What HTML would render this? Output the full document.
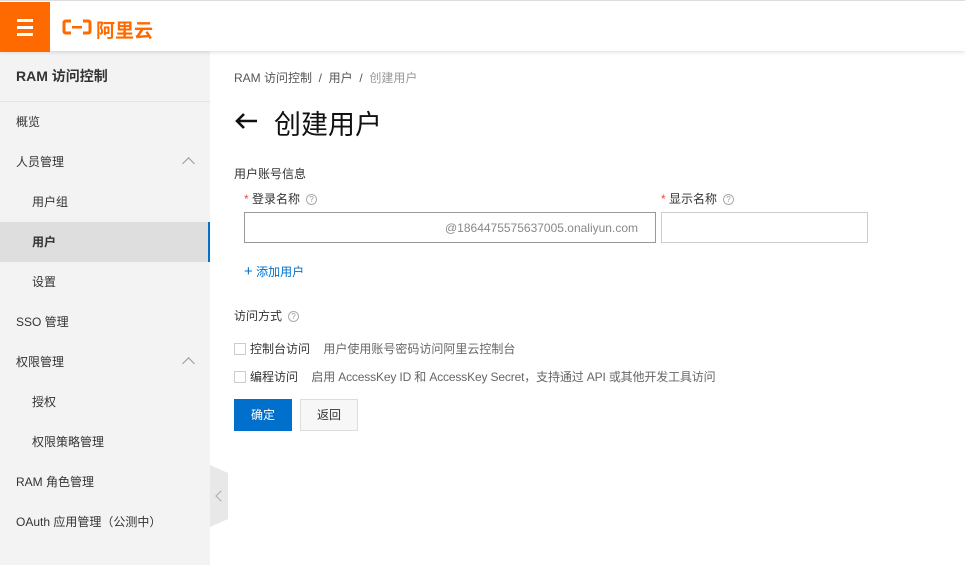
<!DOCTYPE html>
<html><head><meta charset="utf-8"><style>
*{margin:0;padding:0;box-sizing:border-box}
body{width:965px;height:565px;overflow:hidden;background:#fff;font-family:"Liberation Sans","Noto Sans CJK SC",sans-serif;color:#333;position:relative;font-size:12px}
.top{position:absolute;left:0;top:0;width:965px;height:51px;background:#fff;border-top:1px solid #ddd;box-shadow:0 1px 4px rgba(0,0,0,.15);z-index:3}
.burger{position:absolute;left:0;top:1px;width:50px;height:50px;background:#ff6a00}
.burger i{position:absolute;left:17px;width:16px;height:2.5px;background:#fff}
.logo{position:absolute;left:96px;top:15px;color:#ff6a00;font-size:19px;font-weight:bold;letter-spacing:0px}
.side{position:absolute;left:0;top:51px;width:210px;height:514px;background:#f3f3f3}
.side .h{height:51px;line-height:50px;padding-left:16px;font-size:14px;font-weight:bold;color:#333;border-bottom:1px solid #e4e4e4}
.it{height:40px;line-height:40px;padding-left:16px;font-size:12px;color:#333;position:relative}
.sub{padding-left:32px}
.act{background:#dedede;border-right:2px solid #0070cc;font-weight:bold}
.car{position:absolute;right:17px;top:17px;width:9px;height:9px;border-left:1.5px solid #999;border-top:1.5px solid #999;transform:rotate(45deg)}
.tab{position:absolute;left:210px;top:465px;width:18px;height:62px;background:#e8e8e8;clip-path:polygon(0 0,100% 8px,100% 54px,0 100%)}
.tab:after{content:"";position:absolute;left:7px;top:27px;width:7px;height:7px;border-left:1.5px solid #aaa;border-bottom:1.5px solid #aaa;transform:rotate(45deg)}
.a{position:absolute;white-space:nowrap}
.q{display:inline-block;width:11px;height:11px;border:1px solid #aaa;border-radius:50%;font-size:8px;line-height:9px;text-align:center;color:#999;vertical-align:1px;margin-left:6px}
.red{color:#e84d3d}
.cb{display:inline-block;width:12px;height:12px;border:1px solid #ccc;vertical-align:-2px;margin-right:4px;background:#fff}
</style></head><body>
<div class="top"><div class="burger"><i style="top:17px"></i><i style="top:24px"></i><i style="top:31px"></i></div>
<svg style="position:absolute;left:62px;top:18px" width="30" height="16" viewBox="0 0 30 16"><path d="M9 2H4Q2 2 2 4V12Q2 14 4 14H9M21 2H26Q28 2 28 4V12Q28 14 26 14H21" fill="none" stroke="#ff6a00" stroke-width="3"/><rect x="10" y="7" width="10" height="2.5" fill="#ff6a00"/></svg>
<div class="logo">阿里云</div></div>
<div class="side">
<div class="h">RAM 访问控制</div>
<div class="it">概览</div>
<div class="it">人员管理<span class="car"></span></div>
<div class="it sub">用户组</div>
<div class="it sub act">用户</div>
<div class="it sub">设置</div>
<div class="it">SSO 管理</div>
<div class="it">权限管理<span class="car"></span></div>
<div class="it sub">授权</div>
<div class="it sub">权限策略管理</div>
<div class="it">RAM 角色管理</div>
<div class="it">OAuth 应用管理（公测中）</div>
</div>
<div class="tab"></div>
<div class="a" style="left:234px;top:69px;color:#555">RAM 访问控制 &nbsp;/&nbsp; 用户 &nbsp;/&nbsp; <span style="color:#999">创建用户</span></div>
<svg style="position:absolute;left:234px;top:112px" width="24" height="18" viewBox="0 0 24 18"><path d="M23 9H3M10 2L3 9L10 16" fill="none" stroke="#111" stroke-width="2.6"/></svg>
<div class="a" style="left:274px;top:103px;font-size:27px;color:#111">创建用户</div>
<div class="a" style="left:234px;top:165px;color:#333">用户账号信息</div>
<div class="a" style="left:244px;top:190px;color:#333"><span class="red">*</span> 登录名称<span class="q">?</span></div>
<div class="a" style="left:661px;top:190px;color:#333"><span class="red">*</span> 显示名称<span class="q">?</span></div>
<div class="a" style="left:244px;top:212px;width:412px;height:31px;border:1px solid #999;text-align:right;padding-right:17px;line-height:30px;color:#888">@1864475575637005.onaliyun.com</div>
<div class="a" style="left:661px;top:212px;width:207px;height:31px;border:1px solid #ccc"></div>
<div class="a" style="left:244px;top:263px;color:#0070cc"><span style="font-size:15px">+</span> 添加用户</div>
<div class="a" style="left:234px;top:307px;color:#333">访问方式<span class="q">?</span></div>
<div class="a" style="left:234px;top:340px"><span class="cb"></span>控制台访问 <span style="color:#666;margin-left:10px">用户使用账号密码访问阿里云控制台</span></div>
<div class="a" style="left:234px;top:368px"><span class="cb"></span>编程访问 <span style="color:#666;margin-left:10px;letter-spacing:-0.15px">启用 AccessKey ID 和 AccessKey Secret，支持通过 API 或其他开发工具访问</span></div>
<div class="a" style="left:234px;top:399px;width:58px;height:32px;background:#0070cc;color:#fff;line-height:32px;text-align:center">确定</div>
<div class="a" style="left:300px;top:399px;width:58px;height:32px;background:#f7f7f7;border:1px solid #ddd;line-height:30px;text-align:center;color:#333">返回</div>
</body></html>
